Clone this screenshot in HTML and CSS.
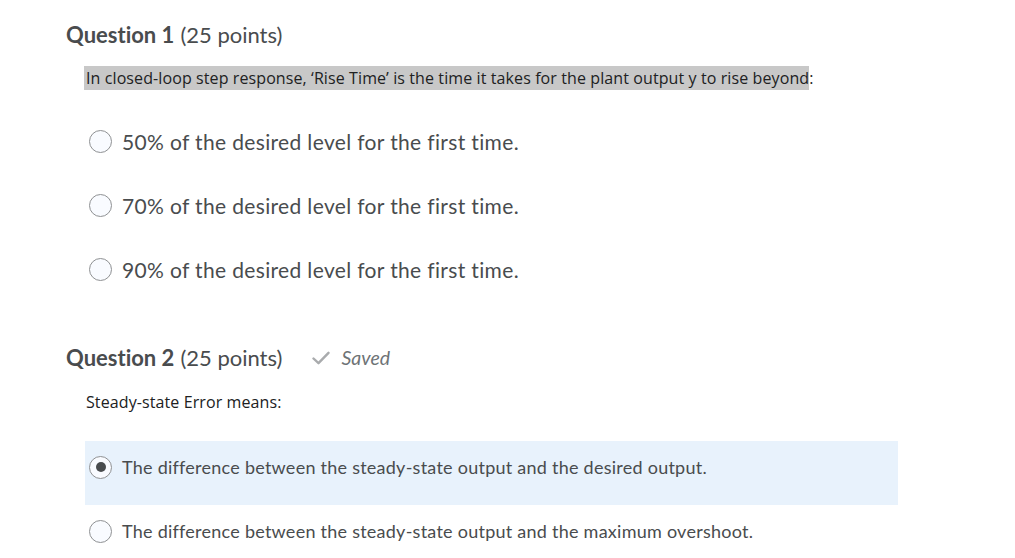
FILE: index.html
```html
<!DOCTYPE html>
<html>
<head>
<meta charset="utf-8">
<link rel="stylesheet" href="styles.css">
</head>
<body>
<div class="page">
  <section class="question q1">
    <h2 class="qhead"><span class="qnum">Question 1</span> <span class="pts">(25 points)</span></h2>
    <p class="qtext"><span class="hl">In closed-loop step response, ‘Rise Time’ is the time it takes for the plant output y to rise beyond</span>:</p>
    <div class="options big">
      <div class="opt"><span class="radio"></span><span class="label">50% of the desired level for the first time.</span></div>
      <div class="opt"><span class="radio"></span><span class="label">70% of the desired level for the first time.</span></div>
      <div class="opt"><span class="radio"></span><span class="label">90% of the desired level for the first time.</span></div>
    </div>
  </section>
  <section class="question q2">
    <h2 class="qhead"><span class="qnum">Question 2</span> <span class="pts">(25 points)</span>
      <span class="saved"><svg class="check" width="18" height="14" viewBox="0 0 18 14"><path d="M1.5 7.5 L6.5 12.2 L16.5 1.8" fill="none" stroke="#a9abad" stroke-width="2.4" stroke-linecap="round" stroke-linejoin="round"/></svg><span class="savedtxt">Saved</span></span>
    </h2>
    <p class="qtext plain">Steady-state Error means:</p>
    <div class="options small">
      <div class="opt selected"><span class="radio on"></span><span class="label">The difference between the steady-state output and the desired output.</span></div>
      <div class="opt"><span class="radio"></span><span class="label">The difference between the steady-state output and the maximum overshoot.</span></div>
    </div>
  </section>
</div>
</body>
</html>
```
FILE: styles.css
```css
html, body { margin: 0; padding: 0; background: #fff; }
body { width: 1015px; height: 558px; overflow: hidden; color: #494c4e; font-family: Lato, "Liberation Sans", sans-serif; font-variant-ligatures: none; }
.page { padding: 20px 0 0 66px; }
.qhead { margin: 0; font-size: 22px; line-height: 30px; font-weight: 400; display: flex; align-items: center; }
.qnum { font-weight: 700; margin-right: 6px; }
.qtext { margin: 17px 0 0 18px; font-family: "Open Sans", "Liberation Sans", sans-serif; font-size: 16px; letter-spacing: 0.1px; line-height: 22px; color: #202122; }
.qtext.plain { margin-top: 18px; padding-left: 2px; }
.hl { background: #c8c8c8; padding: 1px 0 1px 2px; }
.options { margin-left: 19px; }
.options.big { margin-top: 20px; }
.opt { display: flex; align-items: center; height: 64px; }
.big .opt { font-size: 21px; letter-spacing: 0.35px; }
.small .opt { font-size: 18px; letter-spacing: 0.25px; height: 24px; padding: 14px 0 26px; }
.radio { width: 21px; height: 21px; border: 1px solid #8f9193; border-radius: 50%; background: #f9fbff; box-sizing: content-box; margin-left: 4px; margin-right: 10px; flex: none; position: relative; }
.radio.on::after { content: ""; position: absolute; left: 5.5px; top: 5.5px; width: 10px; height: 10px; border-radius: 50%; background: #494c4e; }
.label { color: #494c4e; }
.q2 { margin-top: 42px; }
.saved { display: inline-flex; align-items: center; margin-left: 30px; font-size: 19.5px; font-style: italic; color: #6e7376; }
.check { margin-right: 11px; }
.options.small { margin-top: 28px; width: 813px; margin-left: 19px; }
.selected { background: #e8f2fc; }
```
